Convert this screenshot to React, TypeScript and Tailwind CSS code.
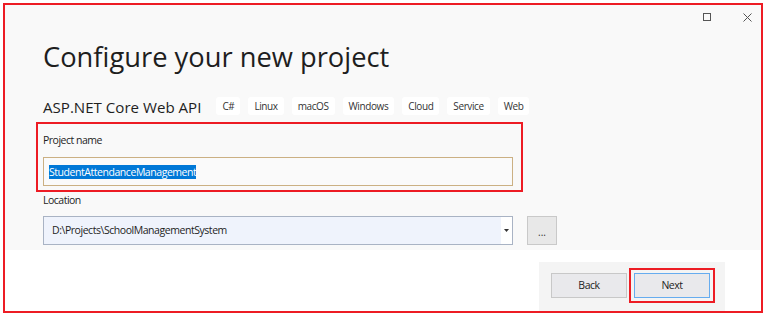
import React from "react";

const tags = ["C#", "Linux", "macOS", "Windows", "Cloud", "Service", "Web"];

export default function App() {
  return (
    <div
      className="w-[768px] h-[316px] bg-white pt-[3px] pl-[3px] text-[#1e1e1e]"
      style={{ fontFamily: '"Open Sans", "Noto Sans", sans-serif' }}
    >
      <div className="w-[760px] h-[310px] border-2 border-[#ed1c24] flex flex-col bg-white">
        <div className="h-[245px] bg-[#f9f9f9] flex flex-col pl-[38px]">
          <div className="h-[34px] flex justify-end items-start pt-[8px] pr-[9px] gap-[32px]">
            <svg width="8" height="8" viewBox="0 0 8 8">
              <rect x="0.5" y="0.5" width="7" height="7" fill="none" stroke="#555" strokeWidth="1" />
            </svg>
            <svg width="9" height="9" viewBox="0 0 9 9">
              <path d="M0.5 0.5 L8.5 8.5 M8.5 0.5 L0.5 8.5" stroke="#555" strokeWidth="1" />
            </svg>
          </div>
          <div className="h-[36px] leading-[36px] text-[27.3px] whitespace-nowrap">
            Configure your new project
          </div>
          <div className="mt-[22px] flex items-start h-[20px]">
            <div className="text-[15.1px] leading-[20px] whitespace-nowrap mr-[15px]">
              ASP.NET Core Web API
            </div>
            <div className="flex gap-[8px]">
              {tags.map((t) => (
                <div
                  key={t}
                  className="h-[18px] px-[6px] bg-white rounded-[3px] text-[10px] tracking-[-0.4px] leading-[18px] text-[#333] whitespace-nowrap"
                >
                  {t}
                </div>
              ))}
            </div>
          </div>
          <div className="mt-[5px] -ml-[7px] w-[487px] border-2 border-[#ed1c24] pl-[5px] pr-[8px] pt-[8px] pb-[4px]">
            <div className="text-[10.5px] tracking-[-0.5px] leading-[16px]">Project name</div>
            <div className="mt-[9px] h-[29px] border border-[#cbb083] bg-[#fafafa] flex items-center pl-[5px]">
              <span className="bg-[#0078d7] text-white text-[10.5px] tracking-[-0.45px] leading-[14px]">
                StudentAttendanceManagement
              </span>
            </div>
          </div>
          <div className="text-[10.5px] tracking-[-0.5px] leading-[16px]">Location</div>
          <div className="mt-[8px] flex items-start">
            <div className="w-[470px] h-[29px] border border-[#a9b3c4] bg-white flex">
              <div className="flex-1 bg-[#eff3fc] flex items-center pl-[8px] text-[10.5px] tracking-[-0.45px]">
                D:\Projects\SchoolManagementSystem
              </div>
              <div className="w-[11px] flex items-center justify-center">
                <svg width="5" height="3" viewBox="0 0 5 3">
                  <path d="M0 0 H5 L2.5 3 Z" fill="#333" />
                </svg>
              </div>
            </div>
            <div className="ml-[14px] w-[30px] h-[29px] border border-[#c9c9c9] bg-[#e8e8e8] flex items-center justify-center">
              <span className="text-[10px] leading-[10px] text-[#333] mt-[2px]">...</span>
            </div>
          </div>
        </div>
        <div className="flex-1 bg-white flex justify-end pr-[36px] pt-[12px]">
          <div className="w-[186px] bg-[#f4f4f4] flex items-start pl-[12px] pt-[6px] gap-[2px]">
            <div className="mt-[5px] w-[76px] h-[25px] border border-[#c8c8c8] bg-[#e9e9ec] flex items-center justify-center text-[10.5px] tracking-[-0.45px]">
              Back
            </div>
            <div className="border-2 border-[#ed1c24] p-[3px]">
              <div className="w-[76px] h-[25px] border border-[#66acef] bg-[#e9e9ec] flex items-center justify-center text-[10.5px] tracking-[-0.45px]">
                Next
              </div>
            </div>
          </div>
        </div>
      </div>
    </div>
  );
}
